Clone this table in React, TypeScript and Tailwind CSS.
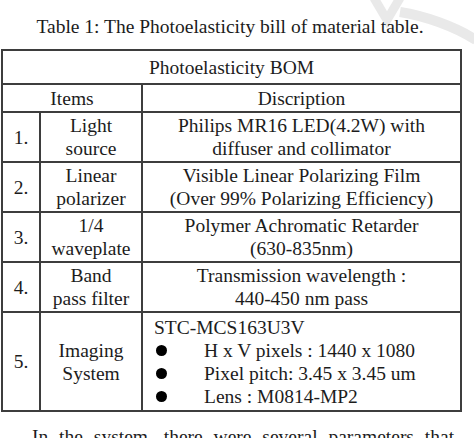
const rows = [
  { no: "1.", item: ["Light", "source"], desc: ["Philips MR16 LED(4.2W) with", "diffuser and collimator"] },
  { no: "2.", item: ["Linear", "polarizer"], desc: ["Visible Linear Polarizing Film", "(Over 99% Polarizing Efficiency)"] },
  { no: "3.", item: ["1/4", "waveplate"], desc: ["Polymer Achromatic Retarder", "(630-835nm)"] },
  { no: "4.", item: ["Band", "pass filter"], desc: ["Transmission wavelength :", "440-450 nm pass"] },
];

const specs = ["H x V pixels : 1440 x 1080", "Pixel pitch: 3.45 x 3.45 um", "Lens : M0814-MP2"];

export default function App() {
  return (
    <div
      className="relative w-[474px] h-[438px] overflow-hidden bg-white text-[#1c1c1c] text-[19.5px] leading-[23px]"
      style={{ fontFamily: '"Liberation Serif", "Times New Roman", serif' }}
    >
      {/* faint watermark in the corner */}
      <svg className="absolute top-0 right-0" width="104" height="60" viewBox="0 0 104 60">
        <path d="M4 -2 L17 20 L30 -2" fill="none" stroke="#e9e9e9" strokeWidth="9" />
        <path d="M30 12 C55 16 84 26 106 40" fill="none" stroke="#e9e9e9" strokeWidth="10" />
      </svg>

      <p className="relative pt-[15px] h-[49px] text-center pr-[14px]">
        Table 1: The Photoelasticity bill of material table.
      </p>

      <table className="relative ml-px w-[459px] table-fixed border-collapse">
        <colgroup>
          <col className="w-[38px]" />
          <col className="w-[102px]" />
          <col className="w-[319px]" />
        </colgroup>
        <tbody>
          <tr className="h-[34px]">
            <td colSpan={3} className="border-2 border-[#3d3d3d] text-center">
              Photoelasticity BOM
            </td>
          </tr>
          <tr className="h-[28px]">
            <td colSpan={2} className="border-2 border-[#3d3d3d] text-center">
              Items
            </td>
            <td className="border-2 border-[#3d3d3d] text-center">Discription</td>
          </tr>
          {rows.map((r) => (
            <tr key={r.no} className="h-[50px]">
              <td className="border-2 border-[#3d3d3d] text-center">{r.no}</td>
              <td className="border-2 border-[#3d3d3d] text-center">
                {r.item.map((l) => (
                  <div key={l}>{l}</div>
                ))}
              </td>
              <td className="border-2 border-[#3d3d3d] text-center">
                {r.desc.map((l) => (
                  <div key={l}>{l}</div>
                ))}
              </td>
            </tr>
          ))}
          <tr className="h-[99px]">
            <td className="border-2 border-[#3d3d3d] text-center">5.</td>
            <td className="border-2 border-[#3d3d3d] text-center">
              <div>Imaging</div>
              <div>System</div>
            </td>
            <td className="border-2 border-[#3d3d3d] pl-[11px]">
              <div>STC-MCS163U3V</div>
              {specs.map((s) => (
                <div key={s} className="flex items-center">
                  <span className="ml-[2px] w-[11px] h-[11px] rounded-full bg-black shrink-0" />
                  <span className="ml-[37px]">{s}</span>
                </div>
              ))}
            </td>
          </tr>
        </tbody>
      </table>

      <p className="mt-[13px] pl-[32px] whitespace-nowrap [word-spacing:6px]">
        In the system, there were several parameters that
      </p>
    </div>
  );
}
